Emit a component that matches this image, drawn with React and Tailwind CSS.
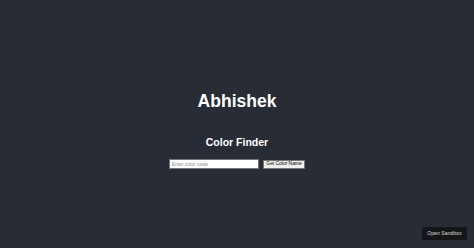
import React from 'react'

export default function App() {
  return (
    <div className="relative w-[474px] h-[248px] overflow-hidden bg-[#282c34] font-['Liberation_Sans',Arial,sans-serif] text-white">
      <div className="flex flex-col items-center pt-[93px]">
        {/* Header */}
        <h1 className="text-[17.5px] leading-none font-bold">Abhishek</h1>
        <h2 className="mt-[26px] text-[10.5px] leading-none font-bold">Color Finder</h2>

        {/* Input row */}
        <div className="mt-[12px] flex items-start gap-[4px]">
          <input
            type="text"
            placeholder="Enter color code"
            className="w-[90px] h-[10px] px-[1.5px] bg-white border border-[#767676] text-[5px] leading-none text-black placeholder:text-[#8a8a8a] outline-none"
          />
          <button className="mt-[1px] w-[42px] h-[9px] bg-[#efefef] border border-[#767676] rounded-[1px] text-[4.9px] leading-none text-black flex items-center justify-center">
            Get Color Name
          </button>
        </div>
      </div>

      {/* Sandbox badge */}
      <button className="absolute right-[7px] bottom-[8px] w-[45px] h-[13px] rounded-[2px] bg-[#151618] text-[5.2px] leading-none text-[#d8d8d8] flex items-center justify-center">
        Open Sandbox
      </button>
    </div>
  )
}
